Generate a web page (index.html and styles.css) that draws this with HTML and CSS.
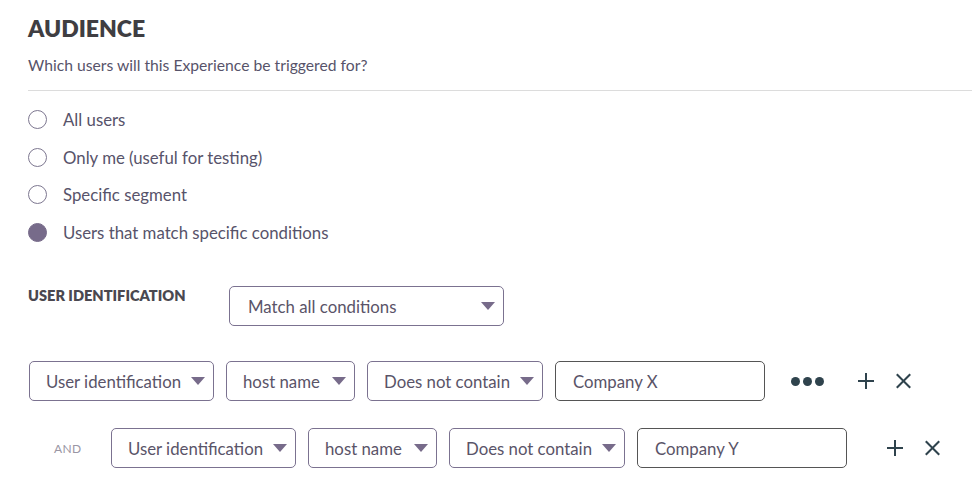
FILE: index.html
```html
<!DOCTYPE html>
<html lang="en">
<head>
  <meta charset="UTF-8">
  <title>Audience</title>
  <link rel="stylesheet" href="styles.css">
</head>
<body>
<div class="section">
  <h2 class="title">AUDIENCE</h2>
  <p class="subtitle">Which users will this Experience be triggered for?</p>
  <hr class="divider">

  <ul class="radio-list">
    <li class="radio-item"><span class="radio"></span>All users</li>
    <li class="radio-item"><span class="radio"></span>Only me (useful for testing)</li>
    <li class="radio-item"><span class="radio"></span>Specific segment</li>
    <li class="radio-item"><span class="radio checked"></span>Users that match specific conditions</li>
  </ul>

  <div class="ident-row">
    <div class="ident-label">USER IDENTIFICATION</div>
    <div class="select select-match">Match all conditions <span class="caret"></span></div>
  </div>

  <div class="cond-row">
    <div class="select s-field">User identification <span class="caret"></span></div>
    <div class="select s-attr">host name <span class="caret"></span></div>
    <div class="select s-op">Does not contain <span class="caret"></span></div>
    <div class="input">Company X</div>
    <span class="dots"><i></i><i></i><i></i></span>
    <span class="icon plus"></span>
    <span class="icon cross"></span>
  </div>

  <div class="cond-row sub">
    <span class="and">AND</span>
    <div class="select s-field">User identification <span class="caret"></span></div>
    <div class="select s-attr">host name <span class="caret"></span></div>
    <div class="select s-op">Does not contain <span class="caret"></span></div>
    <div class="input">Company Y</div>
    <span class="icon plus"></span>
    <span class="icon cross"></span>
  </div>
</div>
</body>
</html>
```

FILE: styles.css
```css
body { margin: 0; font-family: Lato, "Open Sans", sans-serif; color: #5a5468; background: #fff; }
.section { padding: 12px 0 0 28px; }
.title { margin: 0; font-size: 23px; font-weight: 800; color: #3f3e42; line-height: 32px; }
.subtitle { margin: 11px 0 0; font-size: 15.7px; line-height: 20px; color: #57536a; }
.divider { border: none; border-top: 1px solid #dcdcdc; margin: 15px 0 0; }

.radio-list { list-style: none; margin: 10px 0 0; padding: 0; }
.radio-item { display: flex; align-items: center; height: 37.6px; font-size: 16.8px; color: #57536a; }
.radio { width: 17px; height: 17px; border: 1.5px solid #7d7790; border-radius: 50%; margin-right: 16px; box-sizing: content-box; }
.radio.checked { background: #776b8a; border-color: #776b8a; }

.ident-row { display: flex; align-items: flex-start; margin-top: 35px; }
.ident-label { width: 201px; font-size: 14.6px; font-weight: 800; color: #4a4850; padding-top: 1px; line-height: 18px; }

.select, .input { box-sizing: border-box; height: 40px; border: 1px solid #7b7290; border-radius: 5px; display: flex; align-items: center; font-size: 16.8px; color: #5a5468; white-space: nowrap; }
.select { padding: 0 8px 0 16px; justify-content: space-between; }
.select-match { width: 275px; padding-left: 18px; padding-right: 8px; }
.caret { width: 0; height: 0; border-left: 7px solid transparent; border-right: 7px solid transparent; border-top: 8px solid #776b8a; margin-left: 8px; }

.cond-row { display: flex; align-items: center; gap: 12px; margin-top: 35px; padding-left: 1px; }
.cond-row.sub { margin-top: 27px; }
.s-field { width: 185px; }
.s-attr { width: 129px; }
.s-op { width: 176px; }
.input { width: 210px; padding-left: 17px; border-color: #555; }

.dots { display: flex; gap: 3px; margin-left: 14px; }
.dots i { width: 9px; height: 9px; border-radius: 50%; background: #2f434d; }

.icon { position: relative; display: inline-block; width: 16px; height: 16px; }
.icon::before, .icon::after { content: ""; position: absolute; left: 0; top: 7px; width: 16px; height: 2px; background: #2f434d; }
.icon.plus::after { transform: rotate(90deg); }
.icon.cross { width: 14px; height: 14px; }
.icon.cross::before, .icon.cross::after { width: 19px; left: -2.5px; top: 6px; }
.icon.cross::before { transform: rotate(45deg); }
.icon.cross::after { transform: rotate(-45deg); }
.dots + .plus { margin-left: 22px; }
.plus + .cross { margin-left: 10px; }
.input + .plus { margin-left: 28px; }

.sub { padding-left: 26px; }
.and { font-size: 12px; color: #9a96a4; width: 45px; letter-spacing: 0.3px; }
```
